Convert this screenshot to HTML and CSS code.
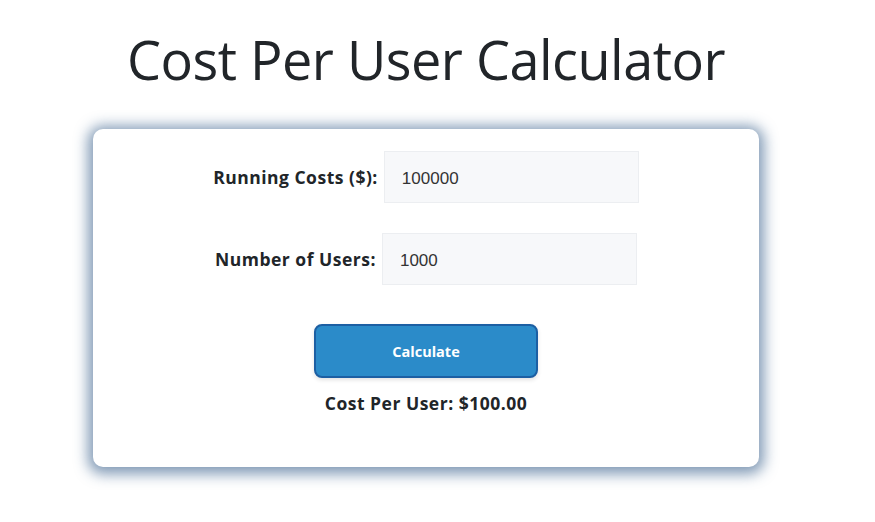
FILE: index.html
```html
<!DOCTYPE html>
<html lang="en">
<head>
<meta charset="utf-8">
<title>Cost Per User Calculator</title>
<link rel="stylesheet" href="styles.css">
</head>
<body>
<div class="page">
  <h1 class="title">Cost Per User Calculator</h1>
  <div class="card">
    <div class="row">
      <label class="label" for="costs">Running Costs ($):</label>
      <input class="field" id="costs" type="text" value="100000">
    </div>
    <div class="row">
      <label class="label" for="users">Number of Users:</label>
      <input class="field" id="users" type="text" value="1000">
    </div>
    <button class="btn" type="button">Calculate</button>
    <p class="result">Cost Per User: $100.00</p>
  </div>
</div>
</body>
</html>
```
FILE: styles.css
```css
html, body {
  margin: 0;
  padding: 0;
  background: #ffffff;
}
body {
  font-family: "Open Sans", "Noto Sans", sans-serif;
  color: #212529;
}
.page {
  width: 852px;
  min-height: 522px;
  padding-bottom: 20px;
  box-sizing: border-box;
  display: flex;
  flex-direction: column;
  align-items: center;
}
.title {
  margin: 19px 0 0;
  font-size: 54px;
  font-weight: 400;
  line-height: 80px;
  letter-spacing: -0.5px;
  color: #212529;
}
.card {
  margin-top: 30px;
  width: 666px;
  height: 338px;
  box-sizing: border-box;
  background: #fff;
  border-radius: 10px;
  box-shadow: 0 2px 14px 5px rgba(50, 90, 135, 0.62);
  padding-top: 22px;
  display: flex;
  flex-direction: column;
  align-items: center;
}
.row {
  display: flex;
  align-items: center;
  gap: 6px;
  margin-bottom: 30px;
}
.label {
  font-weight: 700;
  font-size: 17.5px;
  letter-spacing: 0.5px;
  color: #212529;
}
.field {
  width: 255px;
  height: 52px;
  box-sizing: border-box;
  padding: 4px 18px 0 17px;
  border: 1px solid #eceef1;
  background: #f7f8fa;
  font-family: "Liberation Sans", Arial, sans-serif;
  font-size: 17px;
  color: #333;
  outline: none;
}
.btn {
  margin-top: 9px;
  width: 224px;
  height: 54px;
  border: 2px solid #1c5fa3;
  border-radius: 8px;
  background: #2b8bc9;
  color: #fff;
  font-family: "Open Sans", "Noto Sans", sans-serif;
  font-weight: 700;
  font-size: 14.5px;
  box-shadow: 0 2px 4px rgba(0, 0, 0, 0.12);
}
.result {
  margin: 13px 0 0;
  font-weight: 700;
  font-size: 17.5px;
  letter-spacing: 0.5px;
  color: #212529;
}
```
